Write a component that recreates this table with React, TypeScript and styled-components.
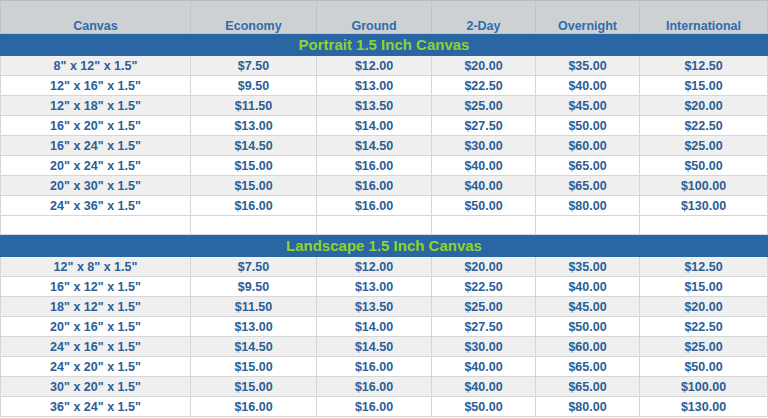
import styled, { createGlobalStyle } from 'styled-components';

const GlobalStyle = createGlobalStyle`
  html, body {
    margin: 0;
    padding: 0;
    background: #ffffff;
  }
  body {
    font-family: "Liberation Sans", Arial, sans-serif;
  }
`;

const PriceTable = styled.table`
  width: 767px;
  border-collapse: collapse;
  table-layout: fixed;
  font-family: "Liberation Sans", Arial, sans-serif;
  font-weight: bold;
`;

const HeadCell = styled.th`
  height: 32px;
  padding: 0;
  vertical-align: bottom;
  text-align: center;
  font-size: 12.5px;
  color: #2f6cac;
  background-color: #cdd1d4;
  border: 1px solid #bfc3c6;
  border-top: 1px solid #b9bdc0;
`;

const BandCell = styled.td`
  height: 21px;
  padding: 0;
  text-align: center;
  font-size: 15px;
  color: #8ed42c;
  background-color: #2966a3;
  border: 1px solid #2966a3;
`;

const Row = styled.tr<{ $shade: boolean }>`
  background-color: ${(p) => (p.$shade ? '#efefef' : '#ffffff')};
`;

const Cell = styled.td`
  height: 19px;
  padding: 0;
  text-align: center;
  font-size: 12.5px;
  color: #2b5e95;
  border: 1px solid #d6d6d6;
`;

const SpacerCell = styled(Cell)`
  height: 18px;
`;

const columns = ['Canvas', 'Economy', 'Ground', '2-Day', 'Overnight', 'International'];
const widths = [190, 126, 115, 104, 104, 128];

const prices = [
  ['$7.50', '$12.00', '$20.00', '$35.00', '$12.50'],
  ['$9.50', '$13.00', '$22.50', '$40.00', '$15.00'],
  ['$11.50', '$13.50', '$25.00', '$45.00', '$20.00'],
  ['$13.00', '$14.00', '$27.50', '$50.00', '$22.50'],
  ['$14.50', '$14.50', '$30.00', '$60.00', '$25.00'],
  ['$15.00', '$16.00', '$40.00', '$65.00', '$50.00'],
  ['$15.00', '$16.00', '$40.00', '$65.00', '$100.00'],
  ['$16.00', '$16.00', '$50.00', '$80.00', '$130.00'],
];

const portraitSizes = ['8" x 12"', '12" x 16"', '12" x 18"', '16" x 20"', '16" x 24"', '20" x 24"', '20" x 30"', '24" x 36"'];
const landscapeSizes = ['12" x 8"', '16" x 12"', '18" x 12"', '20" x 16"', '24" x 16"', '24" x 20"', '30" x 20"', '36" x 24"'];

const Section = ({ title, sizes }: { title: string; sizes: string[] }) => (
  <>
    <tr>
      <BandCell colSpan={6}>{title}</BandCell>
    </tr>
    {sizes.map((size, i) => (
      <Row key={size} $shade={i % 2 === 0}>
        <Cell>{size} x 1.5"</Cell>
        {prices[i].map((p, j) => (
          <Cell key={j}>{p}</Cell>
        ))}
      </Row>
    ))}
  </>
);

export default function App() {
  return (
    <>
      <GlobalStyle />
      <PriceTable>
        <colgroup>
          {widths.map((w, i) => (
            <col key={i} style={{ width: w }} />
          ))}
        </colgroup>
        <thead>
          <tr>
            {columns.map((c) => (
              <HeadCell key={c}>{c}</HeadCell>
            ))}
          </tr>
        </thead>
        <tbody>
          <Section title="Portrait 1.5 Inch Canvas" sizes={portraitSizes} />
          <Row $shade={false}>
            {columns.map((c) => (
              <SpacerCell key={c} />
            ))}
          </Row>
          <Section title="Landscape 1.5 Inch Canvas" sizes={landscapeSizes} />
        </tbody>
      </PriceTable>
    </>
  );
}
